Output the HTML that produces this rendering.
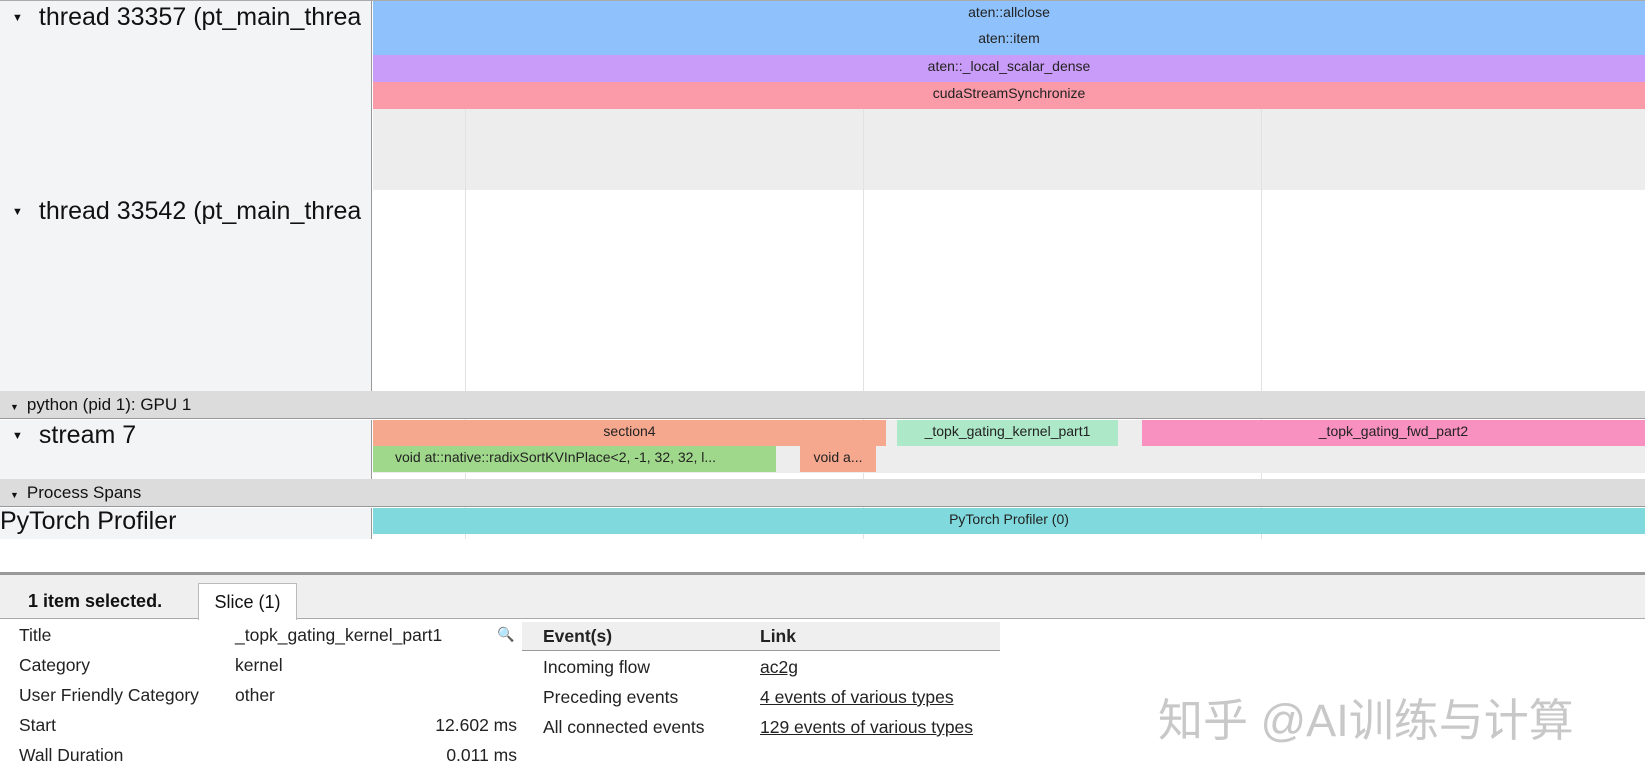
<!DOCTYPE html>
<html><head><meta charset="utf-8"><style>
*{margin:0;padding:0;box-sizing:border-box}
body{width:1645px;height:778px;overflow:hidden;background:#fff;font-family:"Liberation Sans","Noto Sans CJK SC",sans-serif;position:relative;color:#111}
.a{position:absolute}
.bar{position:absolute;font-size:14px;text-align:center;line-height:22px;white-space:nowrap;overflow:hidden;color:#222}
.lbl{position:absolute;font-size:25px;color:#111;white-space:nowrap;overflow:hidden;max-width:353px}
.tri{font-size:11px;vertical-align:middle;margin-right:16px}
.d{position:absolute;font-size:17.5px;color:#222;white-space:nowrap}
u{text-decoration:underline}
</style></head><body>
<div class="a" style="left:0;top:0;width:372px;height:391px;background:#f3f4f5;border-right:1px solid #999"></div>
<div class="a" style="left:0;top:0;width:1645px;height:1px;background:#aaa"></div>
<div class="lbl" style="left:12px;top:3px"><span class="tri">▼</span>thread 33357 (pt_main_threa</div>
<div class="lbl" style="left:12px;top:197px"><span class="tri">▼</span>thread 33542 (pt_main_threa</div>
<div class="a" style="left:373px;top:109px;width:1272px;height:81px;background:#ededed"></div>
<div class="a" style="left:465px;top:109px;width:1px;height:430px;background:#e2e2e2"></div>
<div class="a" style="left:863px;top:109px;width:1px;height:430px;background:#e2e2e2"></div>
<div class="a" style="left:1261px;top:109px;width:1px;height:430px;background:#e2e2e2"></div>
<div class="bar" style="left:373px;top:1px;width:1272px;height:27px;background:#8fc2fc">aten::allclose</div>
<div class="bar" style="left:373px;top:27px;width:1272px;height:28px;background:#8fc2fc">aten::item</div>
<div class="bar" style="left:373px;top:55px;width:1272px;height:27px;background:#ca9cf9">aten::_local_scalar_dense</div>
<div class="bar" style="left:373px;top:82px;width:1272px;height:27px;background:#fb9aa8">cudaStreamSynchronize</div>
<div class="a" style="left:0;top:391px;width:1645px;height:28px;background:#dcdcdc;border-bottom:1px solid #999;font-size:17px;line-height:27px;padding-left:10px"><span style="font-size:9px;margin-right:8px">▼</span>python (pid 1): GPU 1</div>
<div class="a" style="left:0;top:420px;width:372px;height:59px;background:#f3f4f5;border-right:1px solid #999"></div>
<div class="lbl" style="left:12px;top:421px"><span class="tri">▼</span>stream 7</div>
<div class="a" style="left:373px;top:420px;width:1272px;height:53px;background:#ededed"></div>
<div class="bar" style="left:373px;top:420px;width:513px;height:26px;background:#f6a88f">section4</div>
<div class="bar" style="left:897px;top:420px;width:221px;height:26px;background:#ade8c8">_topk_gating_kernel_part1</div>
<div class="bar" style="left:1142px;top:420px;width:503px;height:26px;background:#f991c0">_topk_gating_fwd_part2</div>
<div class="bar" style="left:373px;top:446px;width:403px;height:26px;background:#9fd88b;text-align:left;padding-left:22px">void at::native::radixSortKVInPlace&lt;2, -1, 32, 32, l...</div>
<div class="bar" style="left:800px;top:446px;width:76px;height:26px;background:#f6a88f">void a...</div>
<div class="a" style="left:0;top:479px;width:1645px;height:28px;background:#dcdcdc;border-bottom:1px solid #999;font-size:17px;line-height:27px;padding-left:10px"><span style="font-size:9px;margin-right:8px">▼</span>Process Spans</div>
<div class="a" style="left:0;top:508px;width:372px;height:31px;background:#f3f4f5;border-right:1px solid #999"></div>
<div class="lbl" style="left:0;top:507px">PyTorch Profiler</div>
<div class="bar" style="left:373px;top:508px;width:1272px;height:26px;background:#80d9dc">PyTorch Profiler (0)</div>
<div class="a" style="left:0;top:572px;width:1645px;height:3px;background:#999"></div>
<div class="a" style="left:0;top:575px;width:1645px;height:44px;background:#efefef;border-bottom:1px solid #aaa"></div>
<div class="a" style="left:28px;top:591px;font-size:18px;font-weight:bold">1 item selected.</div>
<div class="a" style="left:198px;top:583px;width:99px;height:37px;background:#fff;border:1px solid #bbb;border-bottom:none;font-size:18px;text-align:center;line-height:36px">Slice (1)</div>
<div class="d" style="left:19px;top:625px">Title</div>
<div class="d" style="left:235px;top:625px">_topk_gating_kernel_part1</div>
<div class="d" style="left:497px;top:626px;color:#2a7ad8;font-size:14px">🔍</div>
<div class="d" style="left:19px;top:655px">Category</div><div class="d" style="left:235px;top:655px">kernel</div>
<div class="d" style="left:19px;top:685px">User Friendly Category</div><div class="d" style="left:235px;top:685px">other</div>
<div class="d" style="left:19px;top:715px">Start</div><div class="d" style="right:1128px;top:715px">12.602 ms</div>
<div class="d" style="left:19px;top:745px">Wall Duration</div><div class="d" style="right:1128px;top:745px">0.011 ms</div>
<div class="a" style="left:522px;top:622px;width:478px;height:29px;background:#efefef;border-bottom:1px solid #999"></div>
<div class="d" style="left:543px;top:626px;font-weight:bold">Event(s)</div>
<div class="d" style="left:760px;top:626px;font-weight:bold">Link</div>
<div class="d" style="left:543px;top:657px">Incoming flow</div><div class="d" style="left:760px;top:657px"><u>ac2g</u></div>
<div class="d" style="left:543px;top:687px">Preceding events</div><div class="d" style="left:760px;top:687px"><u>4 events of various types</u></div>
<div class="d" style="left:543px;top:717px">All connected events</div><div class="d" style="left:760px;top:717px"><u>129 events of various types</u></div>
<div class="a" style="left:1158px;top:684px;font-size:45px;color:#c8c8c8;white-space:nowrap;font-family:'Liberation Sans','Noto Sans CJK SC',sans-serif">知乎 @AI训练与计算</div>
</body></html>
